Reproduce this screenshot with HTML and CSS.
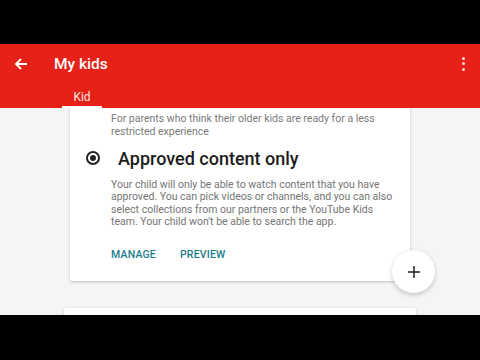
FILE: index.html
```html
<!DOCTYPE html>
<html lang="en">
<head>
    <meta charset="UTF-8">
    <meta name="viewport" content="width=device-width, initial-scale=1.0">
    <title>My kids</title>
    <link rel="stylesheet" href="styles.css">
</head>
<body>
    <div class="letterbox"></div>

    <div class="app">
        <header class="appbar">
            <div class="toolbar">
                <svg class="back" width="14" height="14" viewBox="0 0 14 14">
                    <path d="M13 7H2M7 2L2 7l5 5" fill="none" stroke="#fff" stroke-width="1.8"/>
                </svg>
                <h1 class="title">My kids</h1>
                <div class="kebab"><span></span><span></span><span></span></div>
            </div>
            <nav class="tabs">
                <div class="tab">Kid</div>
            </nav>
        </header>

        <main class="content">
            <section class="card">
                <p class="hint">For parents who think their older kids are ready for a less restricted experience</p>

                <div class="option">
                    <span class="radio"></span>
                    <h2>Approved content only</h2>
                </div>

                <p class="desc">Your child will only be able to watch content that you have approved. You can pick videos or channels, and you can also select collections from our partners or the YouTube Kids team. Your child won't be able to search the app.</p>

                <div class="actions">
                    <button>MANAGE</button>
                    <button>PREVIEW</button>
                </div>
                <span class="touch"></span>
            </section>

            <section class="card next"></section>

            <button class="fab">
                <svg width="14" height="14" viewBox="0 0 14 14">
                    <path d="M7 1v12M1 7h12" stroke="#222" stroke-width="1.5"/>
                </svg>
            </button>
        </main>
    </div>

    <div class="letterbox bottom"></div>
</body>
</html>
```

FILE: styles.css
```css
* {
    box-sizing: border-box;
}

body {
    margin: 0;
    width: 480px;
    height: 360px;
    overflow: hidden;
    background: #000;
    font-family: Roboto, "Noto Sans", sans-serif;
}

.letterbox {
    height: 44px;
    background: #000;
}

.letterbox.bottom {
    height: 45px;
}

.app {
    height: 271px;
    display: flex;
    flex-direction: column;
    background: #f5f5f7;
}

/* red header */
.appbar {
    background: #e62117;
    color: #fff;
    height: 64px;
    flex-shrink: 0;
    position: relative;
    z-index: 2;
}

.toolbar {
    height: 39px;
    display: flex;
    align-items: center;
    padding: 0 0 0 14px;
}

.title {
    margin: 0 0 0 26px;
    font-size: 15.5px;
    font-weight: 500;
    flex: 1;
}

.kebab {
    width: 34px;
    display: flex;
    flex-direction: column;
    align-items: center;
    gap: 2.5px;
}

.kebab span {
    width: 3px;
    height: 3px;
    border-radius: 50%;
    background: #f7d4d2;
}

.tabs {
    padding-left: 62px;
    height: 25px;
    display: flex;
}

.tab {
    width: 40px;
    text-align: center;
    font-size: 12px;
    color: rgba(255, 255, 255, 0.9);
    padding-top: 7px;
    border-bottom: 2px solid #fff;
}

/* list area */
.content {
    flex: 1;
    overflow: hidden;
    position: relative;
    padding-left: 70px;
}

.card {
    width: 340px;
    margin-top: -20px;
    padding: 24px 14px 0 41px;
    background: #fff;
    border-radius: 2px;
    box-shadow: 0 1px 3px rgba(0, 0, 0, 0.22);
    position: relative;
}

.hint {
    margin: 0;
    font-size: 10.5px;
    line-height: 13px;
    color: #7a7a7a;
}

.option {
    display: flex;
    align-items: center;
    margin: 7px 0 0 -25px;
    height: 26px;
}

.radio {
    width: 14px;
    height: 14px;
    border: 2px solid #222;
    border-radius: 50%;
    position: relative;
}

.radio::after {
    content: "";
    position: absolute;
    left: 2px;
    top: 2px;
    width: 6px;
    height: 6px;
    border-radius: 50%;
    background: #222;
}

.option h2 {
    margin: 0 0 0 18px;
    font-size: 18px;
    font-weight: 500;
    color: #1c1c1c;
}

.desc {
    margin: 8px 0 0;
    font-size: 10.5px;
    line-height: 12.4px;
    color: #757575;
}

.actions {
    display: flex;
    gap: 24px;
    padding: 19px 0 20px;
}

.actions button {
    border: none;
    background: none;
    padding: 0;
    font-family: inherit;
    font-size: 10.5px;
    font-weight: 500;
    letter-spacing: 0.2px;
    color: #1b7d8c;
}

.touch {
    position: absolute;
    left: 244px;
    top: 90px;
    width: 18px;
    height: 18px;
    border-radius: 50%;
    border: 1.5px solid rgba(0, 0, 0, 0.08);
}

.card.next {
    width: 352px;
    height: 40px;
    margin: 27px 0 0 -6px;
    padding: 0;
}

.fab {
    position: absolute;
    left: 392px;
    top: 142px;
    width: 43px;
    height: 43px;
    border: none;
    border-radius: 50%;
    background: #fff;
    box-shadow: 0 2px 5px rgba(0, 0, 0, 0.2);
    display: flex;
    align-items: center;
    justify-content: center;
    padding: 0;
}
```
